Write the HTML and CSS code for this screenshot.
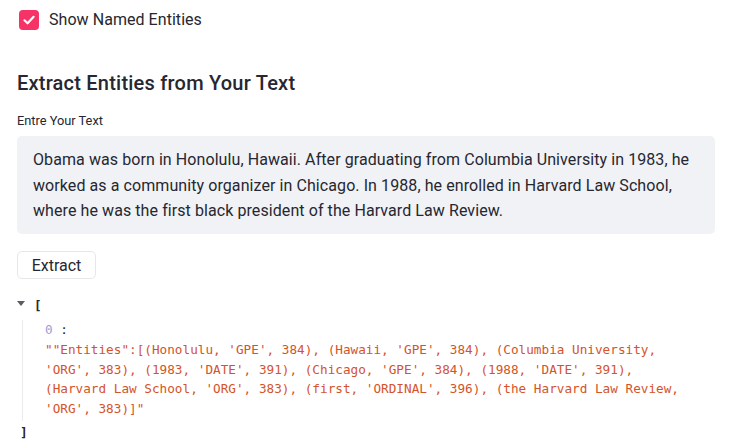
FILE: index.html
```html
<!DOCTYPE html>
<html>
<head>
<meta charset="utf-8">
<link rel="stylesheet" href="styles.css">
</head>
<body>
<main class="app">
  <label class="checkbox">
    <span class="box"><svg viewBox="0 0 20 20" width="20" height="20"><path d="M5.5 10.3 L8.6 13.3 L14.6 6.8" fill="none" stroke="#fff" stroke-width="2.2" stroke-linecap="round" stroke-linejoin="round"/></svg></span>
    <span class="checkbox-label">Show Named Entities</span>
  </label>

  <h3 class="heading">Extract Entities from Your Text</h3>

  <div class="field-label">Entre Your Text</div>
  <div class="textarea">Obama was born in Honolulu, Hawaii. After graduating from Columbia University in 1983, he worked as a community organizer in Chicago. In 1988, he enrolled in Harvard Law School, where he was the first black president of the Harvard Law Review.</div>

  <button class="btn">Extract</button>

  <div class="json">
    <div class="json-open"><span class="caret"></span><span class="bracket">[</span></div>
    <div class="json-body">
      <div class="json-key">0<span class="colon"> :</span></div>
      <div class="json-str">""Entities":[(Honolulu, 'GPE', 384), (Hawaii, 'GPE', 384), (Columbia University, 'ORG', 383), (1983, 'DATE', 391), (Chicago, 'GPE', 384), (1988, 'DATE', 391), (Harvard Law School, 'ORG', 383), (first, 'ORDINAL', 396), (the Harvard Law Review, 'ORG', 383)]"</div>
    </div>
    <div class="json-close"><span class="bracket">]</span></div>
  </div>
</main>
</body>
</html>
```
FILE: styles.css
```css
* { box-sizing: border-box; }
body {
  margin: 0;
  background: #fff;
  color: #262730;
  font-family: Roboto, "Noto Sans", sans-serif;
}
.app {
  width: 715px;
  padding: 10px 0 0 17px;
}
.checkbox {
  display: flex;
  align-items: center;
  gap: 10px;
  height: 20px;
  padding-left: 2px;
}
.box {
  width: 20px;
  height: 20px;
  border-radius: 4px;
  background: #f63366;
  display: flex;
}
.checkbox-label {
  font-size: 16px;
  line-height: 20px;
  letter-spacing: 0.05px;
}
.heading {
  margin: 38px 0 0;
  font-size: 20px;
  font-weight: 500;
  line-height: 30px;
  letter-spacing: 0.22px;
}
.field-label {
  margin-top: 15px;
  font-size: 12.8px;
  line-height: 16px;
}
.textarea {
  margin-top: 7px;
  background: #f0f2f6;
  border-radius: 5px;
  padding: 11px 16px 10px 16px;
  font-size: 16px;
  line-height: 25.6px;
  letter-spacing: 0.08px;
  height: 98px;
}
.btn {
  display: block;
  margin-top: 17px;
  width: 79px;
  height: 28px;
  background: #fff;
  border: 1px solid #e6e7ea;
  border-radius: 5px;
  font-family: inherit;
  font-size: 16px;
  color: #262730;
  padding: 0;
}
.json {
  margin-top: 16px;
  font-family: "DejaVu Sans Mono", monospace;
  font-size: 12.7px;
  line-height: 19.8px;
}
.json-open {
  display: flex;
  align-items: center;
  height: 20px;
}
.caret {
  width: 0;
  height: 0;
  border-left: 4px solid transparent;
  border-right: 4px solid transparent;
  border-top: 5px solid #5a5c66;
  margin: 0 9px 4px 0;
}
.bracket { font-weight: bold; color: #262730; }
.json-body {
  margin: 5px 0 0 5px;
  border-left: 1px solid #ebebeb;
  padding-left: 22px;
  padding-bottom: 2px;
  width: 673px;
}
.json-key { color: #9b9bd6; }
.colon { color: #262730; }
.json-str { color: #d4532a; }
.json-close { margin-top: 1px; padding-left: 3px; }
```
